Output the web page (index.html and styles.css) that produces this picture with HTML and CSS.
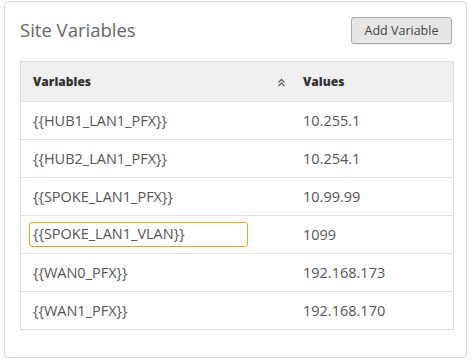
FILE: index.html
```html
<!DOCTYPE html>
<html lang="en">
<head>
    <meta charset="UTF-8">
    <meta name="viewport" content="width=device-width, initial-scale=1.0">
    <title>Site Variables</title>
    <link rel="stylesheet" href="styles.css">
</head>
<body>
    <div class="card">
        <div class="card-header">
            <h2>Site Variables</h2>
            <button class="add-btn">Add Variable</button>
        </div>
        <table class="vars">
            <thead>
                <tr>
                    <th class="col-name">Variables <span class="sort">
                        <svg width="9" height="9" viewBox="0 0 9 9"><path d="M1.5 4.5 L4.5 1.5 L7.5 4.5 M1.5 8 L4.5 5 L7.5 8" fill="none" stroke="#666" stroke-width="1.4"/></svg>
                    </span></th>
                    <th>Values</th>
                </tr>
            </thead>
            <tbody>
                <tr><td>{{HUB1_LAN1_PFX}}</td><td>10.255.1</td></tr>
                <tr><td>{{HUB2_LAN1_PFX}}</td><td>10.254.1</td></tr>
                <tr><td>{{SPOKE_LAN1_PFX}}</td><td>10.99.99</td></tr>
                <tr><td><div class="editing">{{SPOKE_LAN1_VLAN}}</div></td><td>1099</td></tr>
                <tr><td>{{WAN0_PFX}}</td><td>192.168.173</td></tr>
                <tr><td>{{WAN1_PFX}}</td><td>192.168.170</td></tr>
            </tbody>
        </table>
    </div>
</body>
</html>
```

FILE: styles.css
```css
body {
    margin: 0;
    background-color: #fff;
    font-family: 'Open Sans', 'Liberation Sans', sans-serif;
}
.card {
    box-sizing: border-box;
    width: 463px;
    height: 357px;
    margin: 1px 0 0 4px;
    padding: 15px 14px 0 15px;
    border: 1px solid #d8d8d8;
    border-radius: 5px;
    box-shadow: 0 1px 2px rgba(0,0,0,0.08);
}
.card-header {
    display: flex;
    justify-content: space-between;
    align-items: flex-start;
    height: 28px;
}
.card-header h2 {
    margin: 2px 0 0 0;
    font-size: 18.5px;
    font-weight: 400;
    color: #666;
    line-height: 22px;
}
.add-btn {
    width: 101px;
    height: 27px;
    font-family: inherit;
    font-size: 12.5px;
    color: #444;
    background-color: #e6e6e6;
    border: 1px solid #aaa;
    border-radius: 3px;
    box-shadow: 0 1px 1px rgba(0,0,0,0.1);
    padding: 0;
}
.vars {
    width: 434px;
    margin-top: 16px;
    border-collapse: collapse;
    border: 1px solid #ddd;
    font-size: 14.5px;
    color: #555;
}
.vars th {
    height: 39px;
    background-color: #f0f0f0;
    text-align: left;
    font-size: 12px;
    font-weight: 800;
    color: #333;
    padding: 0 12px;
}
.vars th.col-name {
    width: 246px;
    position: relative;
}
.sort {
    position: absolute;
    right: 5px;
    top: 16px;
    line-height: 0;
}
.vars td {
    height: 37px;
    border-top: 1px solid #e2e2e2;
    padding: 0 12px;
}
.editing {
    box-sizing: border-box;
    width: 219px;
    height: 25px;
    margin-left: -4px;
    padding: 0 3px;
    line-height: 22px;
    border: 1.5px solid #e8a520;
    border-radius: 3px;
}
```
